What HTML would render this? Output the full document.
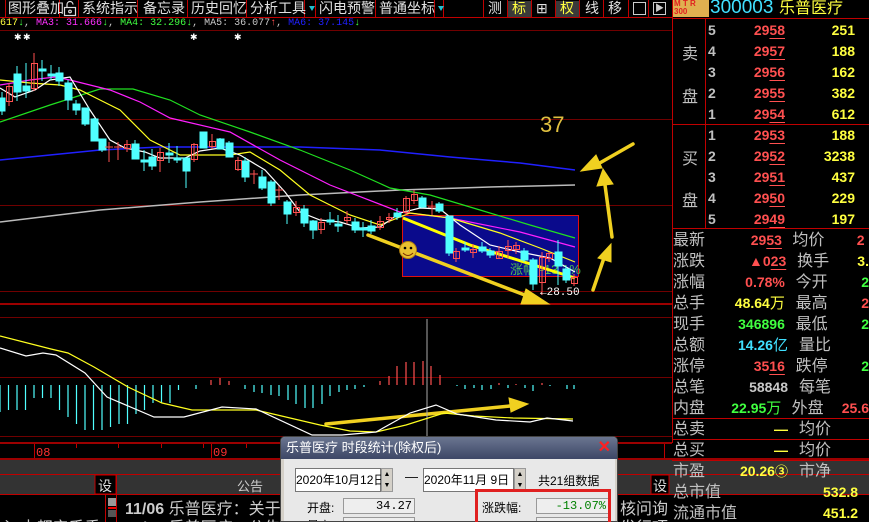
<!DOCTYPE html>
<html><head><meta charset="utf-8">
<style>
*{margin:0;padding:0;box-sizing:border-box}
html,body{width:869px;height:522px;overflow:hidden}
body{background:#000;position:relative;font-family:"Liberation Sans","Noto Sans CJK SC",sans-serif;color:#c0c0c0}
.a{position:absolute;white-space:nowrap}
.tb{font-size:14px;color:#e0e0e0;top:-1px;height:18px;line-height:18px}
.r{color:#ff5050}.y{color:#ffff40}.g{color:#40ff40}.c{color:#40e0ff}.w{color:#c8c8c8}
.num{font-weight:bold;font-size:14px;text-align:right}
.u{text-decoration:underline;text-underline-offset:3px}
.lb{font-size:16px;color:#c0c0c0}
.rv{width:69px;text-align:right;overflow:hidden;display:block}
</style></head><body>

<svg class="a" style="left:0;top:0" width="869" height="522">
<g stroke="#c00000" stroke-width="1" fill="none">
<line x1="0" y1="17.5" x2="672" y2="17.5"/>
<line x1="5.5" y1="0" x2="5.5" y2="17"/><line x1="59.5" y1="0" x2="59.5" y2="17"/><line x1="78.5" y1="0" x2="78.5" y2="17"/>
<line x1="137.5" y1="0" x2="137.5" y2="17"/><line x1="187.5" y1="0" x2="187.5" y2="17"/><line x1="246.5" y1="0" x2="246.5" y2="17"/>
<line x1="304.5" y1="0" x2="304.5" y2="17"/><line x1="315.5" y1="0" x2="315.5" y2="17"/><line x1="375.5" y1="0" x2="375.5" y2="17"/><line x1="434.5" y1="0" x2="434.5" y2="17"/>
<line x1="443.5" y1="0" x2="443.5" y2="17"/><line x1="483.5" y1="0" x2="483.5" y2="17"/><line x1="507.5" y1="0" x2="507.5" y2="17"/><line x1="531.5" y1="0" x2="531.5" y2="17"/><line x1="555.5" y1="0" x2="555.5" y2="17"/><line x1="579.5" y1="0" x2="579.5" y2="17"/><line x1="603.5" y1="0" x2="603.5" y2="17"/><line x1="628.5" y1="0" x2="628.5" y2="17"/><line x1="648.5" y1="0" x2="648.5" y2="17"/>
<line x1="672.5" y1="0" x2="672.5" y2="443"/>
</g>
<rect x="508" y="1" width="23" height="16" fill="#3a3a3a"/>
<rect x="556" y="1" width="23" height="16" fill="#3a3a3a"/>
<path d="M309 6h6l-3 5z M438 6h6l-3 5z" fill="#20c0d0"/>
<!-- lock icon -->
<g stroke="#ddd" fill="none" stroke-width="1.2"><rect x="64.5" y="7.5" width="11" height="8"/><path d="M67,7.5V4.5a3,3 0 0 1 6,0"/><circle cx="70" cy="11.5" r="1.3"/></g>
<g stroke="#700000" stroke-width="1">
<line x1="0" y1="30.5" x2="672" y2="30.5"/>
<line x1="0" y1="119.5" x2="672" y2="119.5"/>
<line x1="0" y1="205.5" x2="672" y2="205.5"/>
<line x1="0" y1="291.5" x2="672" y2="291.5"/>
<line x1="0" y1="317.5" x2="672" y2="317.5"/>
<line x1="0" y1="377.5" x2="672" y2="377.5"/>
<line x1="0" y1="436.5" x2="672" y2="436.5"/>
</g>
<g stroke="#d00000" stroke-width="1.5">
<line x1="0" y1="304" x2="672" y2="304"/>
<line x1="0" y1="443" x2="672" y2="443"/>
<line x1="0" y1="459" x2="869" y2="459"/>
</g>
<g fill="#fff" font-size="9" font-family="Liberation Mono">
<text x="14" y="40">✱</text><text x="23" y="40">✱</text><text x="190" y="40">✱</text><text x="234" y="40">✱</text></g>
<rect x="402.5" y="215.5" width="176" height="61" fill="#0a0a8c" stroke="#e01010"/>
<text x="510" y="274" font-size="13" fill="#50c050" font-family="Liberation Sans,Noto Sans CJK SC">涨幅 -13.1%</text>
<g fill="none" stroke-width="1.2">
<polyline stroke="#2020ff" stroke-width="1.5" points="0,160 50,155 100,150 160,147 240,147 300,147 380,150 450,157 520,163 575,170"/>
<polyline stroke="#bbbbbb" stroke-width="1.5" points="0,222 100,210 200,202 300,195 400,190 490,187 575,185"/>
<polyline stroke="#20e020" points="0,122 50,105 100,89 133,89 170,100 200,115 250,132 300,150 350,170 390,188 430,195 480,210 530,225 575,238"/>
<polyline stroke="#ff20ff" points="0,85 30,80 55,77 70,80 110,90 140,102 170,118 230,132 280,160 330,185 400,212 450,218 520,232 575,247"/>
<polyline stroke="#ffff20" points="0,80 30,83 60,85 80,90 100,100 120,110 150,140 180,155 230,155 250,152 280,170 310,195 350,215 380,225 410,213 450,218 500,233 540,248 575,262"/>
<polyline stroke="#ffffff" points="0,88 15,97 35,90 50,80 70,77 90,110 110,140 125,148 145,152 160,158 185,158 200,151 220,148 240,155 265,170 285,192 300,212 320,220 340,222 360,228 380,227 400,213 420,208 440,209 460,225 490,245 520,252 550,258 575,272"/>
<polyline stroke="#ffff00" stroke-width="3" points="403,218 470,245 575,278"/>
</g>
<g stroke-width="1">
<g stroke="#50ffff" fill="#50ffff">
<line x1="2" y1="92" x2="2" y2="115"/><rect x="-1" y="98" width="6" height="13"/>
<line x1="17" y1="66" x2="17" y2="101"/><rect x="14" y="74" width="7" height="18"/>
<line x1="26" y1="63" x2="26" y2="98"/><rect x="23" y="86" width="7" height="5"/>
<line x1="42" y1="60" x2="42" y2="81"/><rect x="39" y="69" width="7" height="2"/>
<line x1="51" y1="65" x2="51" y2="80"/><rect x="48" y="74" width="7" height="2"/>
<line x1="59" y1="67" x2="59" y2="86"/><rect x="56" y="73" width="7" height="8"/>
<line x1="68" y1="80" x2="68" y2="110"/><rect x="65" y="83" width="7" height="17"/>
<line x1="76" y1="100" x2="76" y2="115"/><rect x="73" y="104" width="7" height="6"/>
<line x1="85" y1="108" x2="85" y2="126"/><rect x="82" y="108" width="7" height="16"/>
<line x1="94" y1="118" x2="94" y2="141"/><rect x="91" y="119" width="7" height="22"/>
<line x1="102" y1="139" x2="102" y2="152"/><rect x="99" y="139" width="7" height="11"/>
<line x1="135" y1="140" x2="135" y2="159"/><rect x="132" y="144" width="7" height="15"/>
<line x1="144" y1="150" x2="144" y2="171"/><rect x="141" y="160" width="7" height="2"/>
<line x1="152" y1="149" x2="152" y2="170"/><rect x="149" y="157" width="7" height="9"/>
<line x1="169" y1="143" x2="169" y2="163"/><rect x="166" y="153" width="7" height="2"/>
<line x1="177" y1="146" x2="177" y2="163"/><rect x="174" y="158" width="7" height="2"/>
<line x1="186" y1="158" x2="186" y2="188"/><rect x="183" y="158" width="7" height="13"/>
<line x1="203" y1="132" x2="203" y2="148"/><rect x="200" y="132" width="7" height="16"/>
<line x1="220" y1="138" x2="220" y2="149"/><rect x="217" y="139" width="7" height="10"/>
<line x1="229" y1="141" x2="229" y2="157"/><rect x="226" y="143" width="7" height="14"/>
<line x1="245" y1="157" x2="245" y2="182"/><rect x="242" y="161" width="7" height="16"/>
<line x1="262" y1="170" x2="262" y2="190"/><rect x="259" y="177" width="7" height="11"/>
<line x1="271" y1="180" x2="271" y2="206"/><rect x="268" y="182" width="7" height="21"/>
<line x1="287" y1="200" x2="287" y2="224"/><rect x="284" y="202" width="7" height="12"/>
<line x1="304" y1="205" x2="304" y2="227"/><rect x="301" y="209" width="7" height="14"/>
<line x1="313" y1="220" x2="313" y2="239"/><rect x="310" y="221" width="7" height="9"/>
<line x1="330" y1="212" x2="330" y2="225"/><rect x="327" y="220" width="7" height="2"/>
<line x1="338" y1="215" x2="338" y2="232"/><rect x="335" y="224" width="7" height="2"/>
<line x1="355" y1="218" x2="355" y2="233"/><rect x="352" y="222" width="7" height="8"/>
<line x1="363" y1="222" x2="363" y2="237"/><rect x="360" y="228" width="7" height="2"/>
<line x1="371" y1="220" x2="371" y2="234"/><rect x="368" y="226" width="7" height="5"/>
<line x1="397" y1="208" x2="397" y2="220"/><rect x="394" y="213" width="7" height="4"/>
<line x1="422" y1="196" x2="422" y2="208"/><rect x="419" y="198" width="7" height="9"/>
<line x1="439" y1="202" x2="439" y2="213"/><rect x="436" y="204" width="7" height="7"/>
<line x1="449" y1="216" x2="449" y2="256"/><rect x="446" y="216" width="7" height="37"/>
<line x1="465" y1="242" x2="465" y2="252"/><rect x="462" y="248" width="7" height="2"/>
<line x1="482" y1="242" x2="482" y2="253"/><rect x="479" y="247" width="7" height="4"/>
<line x1="490" y1="248" x2="490" y2="258"/><rect x="487" y="251" width="7" height="4"/>
<line x1="524" y1="248" x2="524" y2="262"/><rect x="521" y="251" width="7" height="9"/>
<line x1="533" y1="258" x2="533" y2="290"/><rect x="530" y="260" width="7" height="24"/>
<line x1="558" y1="240" x2="558" y2="285"/><rect x="555" y="252" width="7" height="14"/>
<line x1="566" y1="266" x2="566" y2="283"/><rect x="563" y="269" width="7" height="11"/>
</g>
<g stroke="#ff5050" fill="none">
<line x1="9" y1="83" x2="9" y2="106"/><rect x="6.5" y="86.5" width="6" height="15"/>
<line x1="34" y1="53" x2="34" y2="91"/><rect x="31.5" y="63.5" width="6" height="25"/>
<line x1="109" y1="142" x2="109" y2="162"/><line x1="105" y1="147" x2="113" y2="147"/>
<line x1="118" y1="142" x2="118" y2="160"/><line x1="114" y1="147" x2="122" y2="147"/>
<line x1="127" y1="140" x2="127" y2="152"/><rect x="124.5" y="144.5" width="6" height="4"/>
<line x1="160" y1="148" x2="160" y2="172"/><rect x="157.5" y="152.5" width="6" height="8"/>
<line x1="194" y1="143" x2="194" y2="162"/><rect x="191.5" y="144.5" width="6" height="15"/>
<line x1="212" y1="134" x2="212" y2="149"/><rect x="209.5" y="141.5" width="6" height="5"/>
<line x1="238" y1="157" x2="238" y2="171"/><rect x="235.5" y="160.5" width="6" height="9"/>
<line x1="254" y1="170" x2="254" y2="184"/><line x1="250" y1="174" x2="258" y2="174"/>
<line x1="279" y1="186" x2="279" y2="200"/><line x1="275" y1="190" x2="283" y2="190"/>
<line x1="296" y1="201" x2="296" y2="216"/><rect x="293.5" y="207.5" width="6" height="5"/>
<line x1="321" y1="218" x2="321" y2="234"/><rect x="318.5" y="222.5" width="6" height="7"/>
<line x1="347" y1="211" x2="347" y2="224"/><rect x="344.5" y="217.5" width="6" height="3"/>
<line x1="380" y1="216" x2="380" y2="230"/><rect x="377.5" y="221.5" width="6" height="6"/>
<line x1="389" y1="213" x2="389" y2="223"/><rect x="386.5" y="217.5" width="6" height="2"/>
<line x1="406" y1="196" x2="406" y2="215"/><rect x="403.5" y="198.5" width="6" height="14"/>
<line x1="414" y1="190" x2="414" y2="204"/><rect x="411.5" y="194.5" width="6" height="6"/>
<line x1="432" y1="201" x2="432" y2="215"/><line x1="428" y1="207" x2="436" y2="207"/>
<line x1="456" y1="248" x2="456" y2="262"/><rect x="453.5" y="251.5" width="6" height="7"/>
<line x1="473" y1="244" x2="473" y2="258"/><rect x="470.5" y="249.5" width="6" height="3"/>
<line x1="499" y1="246" x2="499" y2="258"/><rect x="496.5" y="251.5" width="6" height="7"/>
<line x1="508" y1="240" x2="508" y2="258"/><rect x="505.5" y="246.5" width="6" height="4"/>
<line x1="516" y1="242" x2="516" y2="254"/><rect x="513.5" y="245.5" width="6" height="4"/>
<line x1="542" y1="252" x2="542" y2="295"/><rect x="539.5" y="257.5" width="6" height="25"/>
<line x1="549" y1="252" x2="549" y2="262"/><rect x="546.5" y="253.5" width="6" height="5"/>
<line x1="574" y1="274" x2="574" y2="286"/><rect x="571.5" y="277.5" width="6" height="6"/>
</g>
</g>
<g stroke="#f0d020" stroke-width="3.5" fill="#f0d020" stroke-linecap="round">
<line x1="368" y1="235" x2="530" y2="297"/><path d="M549,304 L526,289 L521,304Z" stroke-width="1"/>
<line x1="633" y1="144" x2="598" y2="164"/><path d="M581,171 L596,155 L602,168Z" stroke-width="1"/>
<line x1="612" y1="237" x2="605" y2="185"/><path d="M603,169 L597,186 L613,184Z" stroke-width="1"/>
<line x1="593" y1="290" x2="604" y2="258"/><path d="M611,244 L598,258 L611,262Z" stroke-width="1"/>
<line x1="326" y1="424" x2="510" y2="406"/><path d="M528,404 L509,398 L511,412Z" stroke-width="1"/>
</g>
<circle cx="408" cy="250" r="8.5" fill="#e8c030" stroke="#b08010"/>
<circle cx="405" cy="248" r="1.3" fill="#000"/><circle cx="411" cy="248" r="1.3" fill="#000"/>
<path d="M403,253 Q408,258 413,253" stroke="#803000" fill="none"/>
<text x="540" y="132" font-size="22" fill="#e0c040" font-family="Liberation Sans">37</text>
<text x="540" y="295" font-size="11" fill="#fff" font-family="Liberation Mono">←28.50</text>
<g stroke="#50ffff" stroke-width="1.2">
<path d="M0,385V412M8.5,385V410M17,385V410M25.5,385V410M34,385V398M42.5,385V398M51,385V398M59.5,385V410M68,385V417M76.5,385V424M85,385V430M93.5,385V430M102,385V430M110.5,385V427M119,385V424M127.5,385V424M136,385V414M144.5,385V410M153,385V403M161.5,385V403M170,385V403M178.5,385V390M196,385V389M245,385V389M254,385V392M262,385V393M271,385V395M279,385V396M288,385V400M296,385V404M305,385V408M313,385V408M322,385V404M330,385V396M339,385V392M347,385V390M355,385V389M364,385V387M457,385V386M465,385V389M474,385V388M482,385V390M491,385V389M508,385V388M525,385V388M533,385V391M550,385V386M567,385V389M574,385V389"/>
</g>
<g stroke="#ff5050" stroke-width="1.2">
<path d="M211,385V380M220,385V378M229,385V381M380,385V381M389,385V376M397,385V366M406,385V362M414,385V362M423,385V361M431,385V366M440,385V375M499,385V383M516,385V384M542,385V383"/>
</g>
<line x1="427" y1="319" x2="427" y2="436" stroke="#aaa"/>
<polyline fill="none" stroke="#ffff20" stroke-width="1.2" points="0,336 51,349 68,353 94,367 128,387 162,403 192,410 256,410 320,425 350,431 376,432 406,425 444,413 474,416 513,418 573,419"/>
<polyline fill="none" stroke="#ffffff" stroke-width="1.2" points="0,348 26,356 43,353 56,355 85,373 107,397 154,417 184,417 222,407 256,409 312,435 342,435 376,432 410,413 436,405 457,414 496,420 530,422 547,418 573,421"/>
<g stroke="#c00000"><path d="M34.5,444V458M76.5,444V448M118.5,444V448M161.5,444V448M203.5,444V448M211.5,444V458M246.5,444V448M664.5,444V458"/></g>
<text x="36" y="456" font-size="12" fill="#ff3030" font-family="Liberation Mono">08</text>
<text x="213" y="456" font-size="12" fill="#ff3030" font-family="Liberation Mono">09</text>
<rect x="0" y="460" width="869" height="14" fill="#333"/>
<rect x="0" y="475" width="869" height="19" fill="#333"/>
<g stroke="#c00000"><line x1="0" y1="474.5" x2="869" y2="474.5"/><line x1="0" y1="494.5" x2="869" y2="494.5"/><line x1="116.5" y1="475" x2="116.5" y2="522"/><line x1="105.5" y1="495" x2="105.5" y2="522"/></g>
<rect x="95" y="475" width="21" height="19" fill="#000" stroke="#c00000"/>
<rect x="651" y="475" width="18" height="19" fill="#000" stroke="#c00000"/>
<rect x="108" y="498" width="8" height="8" fill="#999"/><rect x="108" y="507" width="8" height="2" fill="#e00"/><rect x="108" y="510" width="8" height="7" fill="#555"/>
</svg>

<div class="a tb" style="left:8px">图形叠加</div>
<div class="a tb" style="left:82px">系统指示</div>
<div class="a tb" style="left:143px">备忘录</div>
<div class="a tb" style="left:191px">历史回忆</div>
<div class="a tb" style="left:250px">分析工具</div>
<div class="a tb" style="left:319px">闪电预警</div>
<div class="a tb" style="left:379px">普通坐标</div>
<div class="a tb" style="left:488px">测</div>
<div class="a tb" style="left:512px;color:#ffff40">标</div>
<div class="a tb" style="left:536px">⊞</div>
<div class="a tb" style="left:560px;color:#ffff40">权</div>
<div class="a tb" style="left:585px">线</div>
<div class="a tb" style="left:608px">移</div>
<div class="a" style="left:633px;top:2px;width:13px;height:13px;border:1px solid #ccc"></div>
<div class="a" style="left:653px;top:2px;width:13px;height:13px;border:1px solid #ccc;color:#ccc;font-size:9px;line-height:11px;text-align:center">▶</div>
<div class="a" style="left:673px;top:0;width:36px;height:17px;background:#e0b050;color:#e02020;font-size:8px;font-weight:bold;line-height:8px;padding-left:1px">M T R<br>300</div>
<div class="a c" style="left:710px;top:-2px;font-size:19px;line-height:20px">300003</div>
<div class="a y" style="left:779px;top:-1px;font-size:16px;line-height:19px">乐普医疗</div>

<div class="a" style="left:0;top:18px;font-family:'Liberation Mono',monospace;font-size:10px;line-height:12px">
<span class="y">617</span><span class="g">↓</span><span class="w">, </span><span style="color:#ff30ff">MA3: 31.666</span><span class="g">↓</span><span class="w">, </span><span class="g">MA4: 32.296↓</span><span class="w">, MA5: 36.077</span><span class="r">↑</span><span class="w">, </span><span style="color:#2020ff">MA6: 37.145</span><span class="g">↓</span></div>

<div class="a" style="left:672px;top:18px;width:197px;height:1px;background:#c00000"></div>
<div class="a" style="left:672px;top:124px;width:197px;height:1px;background:#c00000"></div>
<div class="a" style="left:672px;top:228px;width:197px;height:1px;background:#c00000"></div>
<div class="a" style="left:705px;top:18px;width:1px;height:210px;background:#c00000"></div>
<div class="a lb" style="left:682px;top:40px">卖</div><div class="a lb" style="left:682px;top:83px">盘</div>
<div class="a lb" style="left:682px;top:145px">买</div><div class="a lb" style="left:682px;top:187px">盘</div>
<div class="a" style="left:708px;top:20px;width:150px;font-size:14px;line-height:21px;font-weight:bold">
<div style="display:flex"><span style="width:30px;color:#c0c0c0">5</span><span class="r" style="width:47px;text-align:right">29<span class="u">58</span></span><span class="y" style="width:70px;text-align:right">251</span></div>
<div style="display:flex"><span style="width:30px;color:#c0c0c0">4</span><span class="r" style="width:47px;text-align:right">29<span class="u">57</span></span><span class="y" style="width:70px;text-align:right">188</span></div>
<div style="display:flex"><span style="width:30px;color:#c0c0c0">3</span><span class="r" style="width:47px;text-align:right">29<span class="u">56</span></span><span class="y" style="width:70px;text-align:right">162</span></div>
<div style="display:flex"><span style="width:30px;color:#c0c0c0">2</span><span class="r" style="width:47px;text-align:right">29<span class="u">55</span></span><span class="y" style="width:70px;text-align:right">382</span></div>
<div style="display:flex"><span style="width:30px;color:#c0c0c0">1</span><span class="r" style="width:47px;text-align:right">29<span class="u">54</span></span><span class="y" style="width:70px;text-align:right">612</span></div>
<div style="display:flex"><span style="width:30px;color:#c0c0c0">1</span><span class="r" style="width:47px;text-align:right">29<span class="u">53</span></span><span class="y" style="width:70px;text-align:right">188</span></div>
<div style="display:flex"><span style="width:30px;color:#c0c0c0">2</span><span class="r" style="width:47px;text-align:right">29<span class="u">52</span></span><span class="y" style="width:70px;text-align:right">3238</span></div>
<div style="display:flex"><span style="width:30px;color:#c0c0c0">3</span><span class="r" style="width:47px;text-align:right">29<span class="u">51</span></span><span class="y" style="width:70px;text-align:right">437</span></div>
<div style="display:flex"><span style="width:30px;color:#c0c0c0">4</span><span class="r" style="width:47px;text-align:right">29<span class="u">50</span></span><span class="y" style="width:70px;text-align:right">229</span></div>
<div style="display:flex"><span style="width:30px;color:#c0c0c0">5</span><span class="r" style="width:47px;text-align:right">29<span class="u">49</span></span><span class="y" style="width:70px;text-align:right">197</span></div>
</div>

<div class="a" style="left:672px;top:418px;width:197px;height:1px;background:#c00000"></div>
<div class="a" style="left:672px;top:439px;width:197px;height:1px;background:#c00000"></div>
<div class="a" style="left:672px;top:460px;width:197px;height:1px;background:#c00000"></div>
<div class="a" style="left:673px;top:230px;width:196px;font-size:16px;line-height:21px;overflow:hidden">
<div style="display:flex"><span style="width:55px">最新</span><span class="num r" style="width:60px">29<span class="u">53</span></span><span style="width:11px"></span><span style="width:50px">均价</span><span class="num r" style="width:30px;text-align:left;padding-left:17px">2</span></div>
<div style="display:flex"><span style="width:55px">涨跌</span><span class="num r" style="width:60px">▲0<span class="u">23</span></span><span style="width:11px"></span><span style="width:50px">换手</span><span class="num y" style="text-align:left;padding-left:11px">3.</span></div>
<div style="display:flex"><span style="width:55px">涨幅</span><span class="num r" style="width:60px">0.78%</span><span style="width:11px"></span><span style="width:50px">今开</span><span class="num g" style="text-align:left;padding-left:17px">2</span></div>
<div style="display:flex"><span style="width:55px">总手</span><span class="num y" style="width:60px">48.64<span style="font-weight:normal;font-size:15px">万</span></span><span style="width:11px"></span><span style="width:50px">最高</span><span class="num r" style="text-align:left;padding-left:17px">2</span></div>
<div style="display:flex"><span style="width:55px">现手</span><span class="num g" style="width:60px">346896</span><span style="width:11px"></span><span style="width:50px">最低</span><span class="num g" style="text-align:left;padding-left:17px">2</span></div>
<div style="display:flex"><span style="width:55px">总额</span><span class="num c" style="width:60px">14.26<span style="font-weight:normal;font-size:15px">亿</span></span><span style="width:11px"></span><span style="width:50px">量比</span></div>
<div style="display:flex"><span style="width:55px">涨停</span><span class="num r" style="width:60px">35<span class="u">16</span></span><span style="width:11px"></span><span style="width:50px">跌停</span><span class="num g" style="text-align:left;padding-left:17px">2</span></div>
<div style="display:flex"><span style="width:55px">总笔</span><span class="num w" style="width:60px">58848</span><span style="width:11px"></span><span style="width:50px">每笔</span></div>
<div style="display:flex"><span style="width:55px">内盘</span><span class="num g" style="width:60px">22.95<span style="font-weight:normal;font-size:15px">万</span></span><span style="width:11px"></span><span style="width:50px">外盘</span><span class="num r" style="text-align:left;padding-left:3px">25.6</span></div>
<div style="display:flex"><span style="width:55px">总卖</span><span class="num y" style="width:60px">—</span><span style="width:11px"></span><span style="width:50px">均价</span></div>
<div style="display:flex"><span style="width:55px">总买</span><span class="num y" style="width:60px">—</span><span style="width:11px"></span><span style="width:50px">均价</span></div>
<div style="display:flex"><span style="width:55px">市盈</span><span class="num y" style="width:60px">20.26<span style="font-size:13px">③</span></span><span style="width:11px"></span><span style="width:50px">市净</span></div>
<div style="display:flex"><span style="width:150px">总市值</span><span class="num y">532.8</span></div>
<div style="display:flex"><span style="width:150px">流通市值</span><span class="num y">451.2</span></div>
</div>

<div class="a" style="left:98px;top:476px;font-size:14px;color:#ddd">设</div>
<div class="a" style="left:653px;top:476px;font-size:14px;color:#ddd">设</div>
<div class="a" style="left:237px;top:476px;font-size:13px;color:#ccc">公告</div>
<div class="a" style="left:125px;top:495px;font-size:16px;color:#ccc"><b>11/06</b> 乐普医疗：关于</div>
<div class="a" style="left:125px;top:514px;font-size:16px;color:#ccc"><b>11/06</b> 乐普医疗：公告</div>
<div class="a" style="left:0;top:514px;font-size:16px;color:#ccc">心 中都产手乘</div>
<div class="a" style="left:620px;top:495px;font-size:16px;color:#ccc">核问询</div>
<div class="a" style="left:620px;top:514px;font-size:16px;color:#ccc">发行项</div>

<div class="a" style="left:280px;top:436px;width:338px;height:86px;background:#d4d0c8;border:1px solid #444;border-radius:5px 5px 0 0;overflow:hidden">
<div style="height:22px;background:linear-gradient(#6a7590,#3d4766);color:#fff;font-size:13px;line-height:21px;padding-left:5px">乐普医疗 时段统计(除权后)<span style="position:absolute;right:6px;top:0;color:#ff2020;font-weight:bold;font-size:16px">✕</span></div>
<div style="position:absolute;left:3px;top:22px;width:331px;height:70px;background:#e8e8e8"></div>
<div style="position:absolute;left:14px;top:31px;width:86px;height:24px;background:#fff;border:1px solid #777;color:#000;font-size:12px;line-height:22px">2020年10月12日</div>
<div style="position:absolute;left:100px;top:31px;width:12px;height:24px;background:#d4d0c8;border:1px solid #999;font-size:7px;line-height:11px;text-align:center;color:#000">▲<br>▼</div>
<div style="position:absolute;left:124px;top:32px;color:#000;font-size:13px">—</div>
<div style="position:absolute;left:142px;top:31px;width:91px;height:24px;background:#fff;border:1px solid #777;color:#000;font-size:12px;line-height:22px">2020年11月 9日</div>
<div style="position:absolute;left:233px;top:31px;width:12px;height:24px;background:#d4d0c8;border:1px solid #999;font-size:7px;line-height:11px;text-align:center;color:#000">▲<br>▼</div>
<div style="position:absolute;left:257px;top:35px;color:#000;font-size:12px">共21组数据</div>
<div style="position:absolute;left:26px;top:62px;color:#000;font-size:12px">开盘:</div>
<div style="position:absolute;left:62px;top:61px;width:72px;height:16px;background:#eee;border:1px solid #999;color:#000;font-size:12px;text-align:right;padding-right:2px;font-family:'Liberation Mono',monospace;line-height:14px">34.27</div>
<div style="position:absolute;left:201px;top:62px;color:#000;font-size:12px">涨跌幅:</div>
<div style="position:absolute;left:255px;top:61px;width:73px;height:16px;background:#eee;border:1px solid #999;color:#008000;font-size:12px;text-align:right;padding-right:2px;font-family:'Liberation Mono',monospace;line-height:14px">-13.07%</div>
<div style="position:absolute;left:26px;top:80px;color:#000;font-size:12px">最高</div>
<div style="position:absolute;left:62px;top:80px;width:72px;height:16px;background:#eee;border:1px solid #999"></div>
<div style="position:absolute;left:255px;top:80px;width:73px;height:16px;background:#eee;border:1px solid #999"></div>
</div>
<div class="a" style="left:475px;top:489px;width:136px;height:40px;border:3px solid #e02020"></div>
</body></html>
